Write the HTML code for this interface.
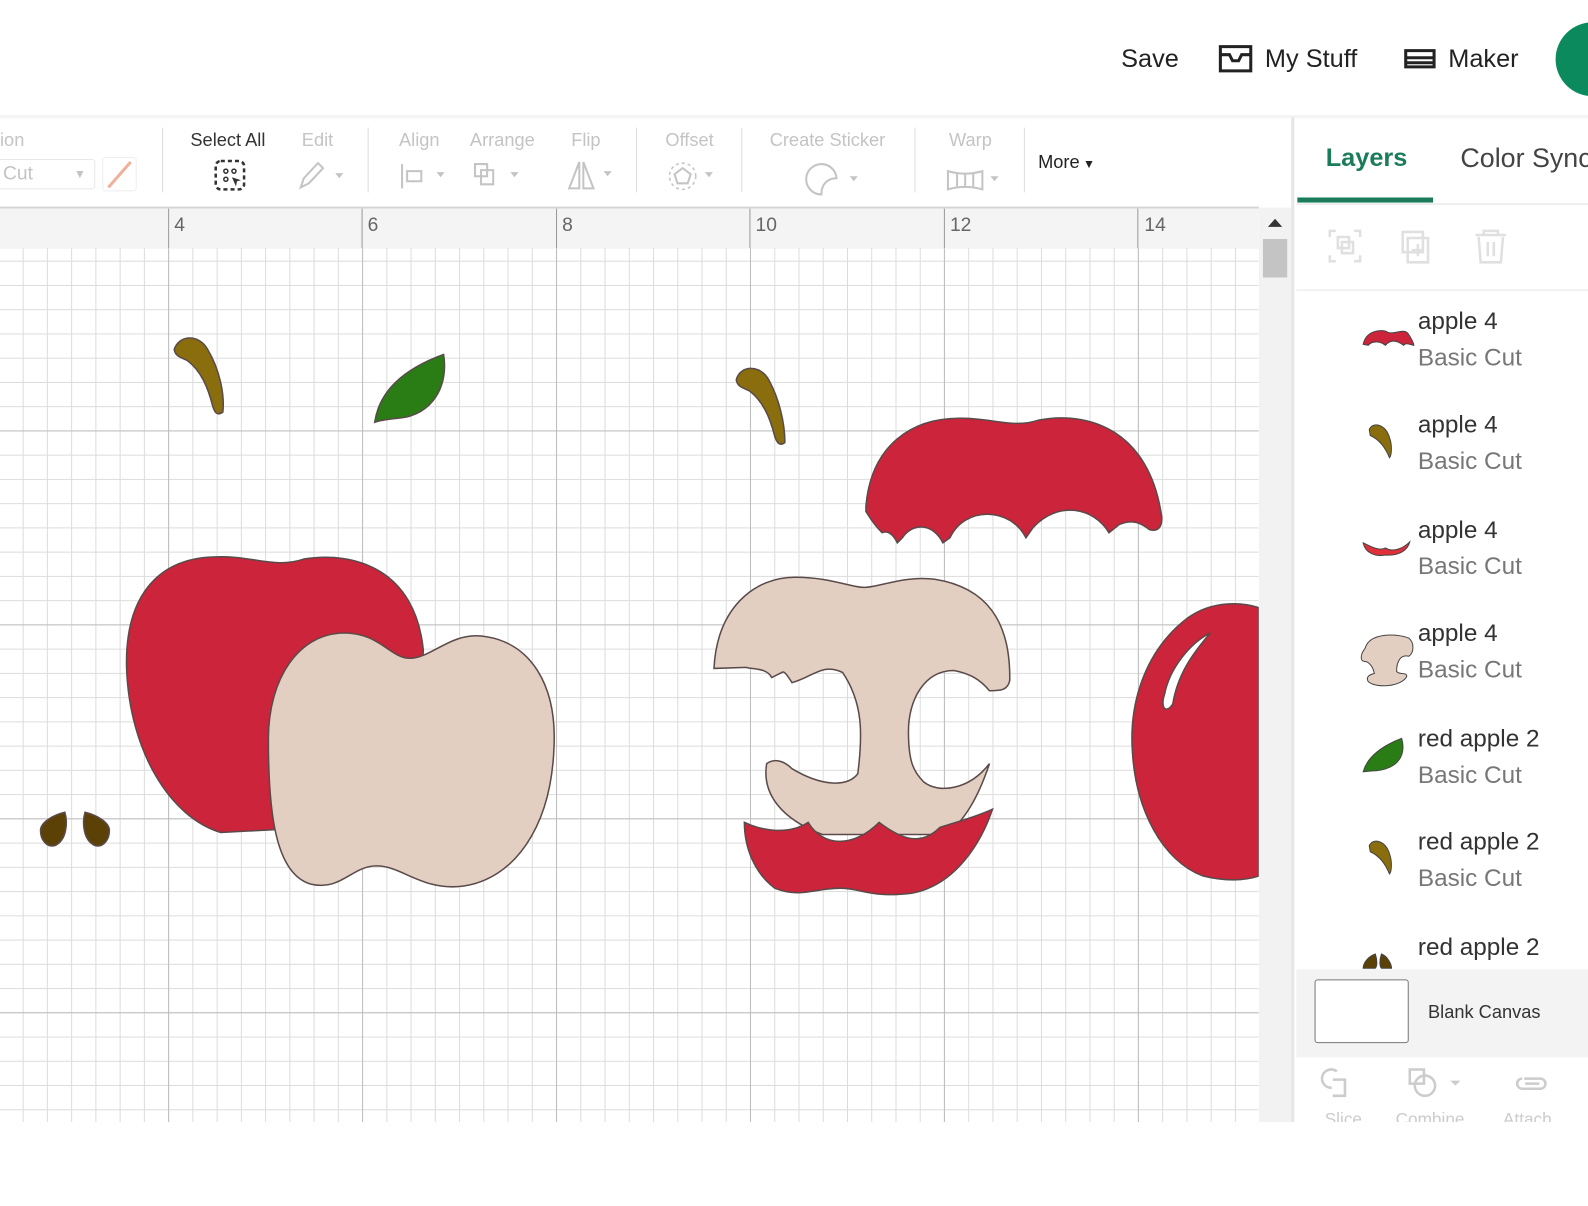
<!DOCTYPE html>
<html><head><meta charset="utf-8"><style>
*{margin:0;padding:0;box-sizing:border-box}
body{width:1588px;height:1191px;overflow:hidden;background:#fff;font-family:"Liberation Sans",sans-serif;position:relative}
#w{position:absolute;left:0;top:0;width:1568px;height:1176px;transform:scale(1.01276);transform-origin:0 0}
.abs{position:absolute}
.tb{color:#c4c4c4;font-size:18px}
.lt{position:absolute;left:1400px;font-size:24px;color:#333;line-height:36px}
.lt span{display:block;color:#777}
</style></head><body><div id="w">
<!-- header -->
<div class="abs" style="left:1107px;top:44px;font-size:25px;color:#222">Save</div>
<svg class="abs" style="left:1202px;top:42px" width="36" height="32" viewBox="0 0 36 32"><path d="M3 4h30v24H3z M3 12h9l3 6h6l3-6h9" fill="none" stroke="#222" stroke-width="3"/></svg>
<div class="abs" style="left:1249px;top:44px;font-size:25px;color:#222">My Stuff</div>
<svg class="abs" style="left:1384px;top:46px" width="36" height="24" viewBox="0 0 36 24"><path d="M4 4h28v16H4z M4 11h28 M4 16h28" fill="none" stroke="#222" stroke-width="3"/></svg>
<div class="abs" style="left:1430px;top:44px;font-size:25px;color:#222">Maker</div>
<div class="abs" style="left:1536px;top:22px;width:80px;height:73px;border-radius:40px;background:#0b8a5e"></div>
<div class="abs" style="left:0;top:114px;width:1588px;height:4px;background:linear-gradient(#eee,#fff)"></div>
<!-- toolbar -->
<div class="abs tb" style="left:0;top:128px">ion</div>
<div class="abs" style="left:-4px;top:157px;width:98px;height:30px;border:1px solid #e8e8e8;border-radius:3px;color:#c4c4c4;font-size:19px;padding:3px 6px">Cut<span style="position:absolute;left:76px;font-size:12px;top:7px">▼</span></div>
<div class="abs" style="left:101px;top:155px;width:34px;height:34px;border:1px solid #eee;border-radius:3px"></div>
<svg class="abs" style="left:101px;top:155px" width="34" height="34"><line x1="6" y1="30" x2="28" y2="5" stroke="#f0b09a" stroke-width="3"/></svg>
<div class="abs" style="left:160px;top:126px;width:1px;height:64px;background:#ddd"></div>
<div class="abs" style="left:188px;top:128px;font-size:18px;color:#333">Select All</div>
<svg class="abs" style="left:210px;top:156px" width="34" height="34"><rect x="3" y="3" width="28" height="28" rx="5" fill="none" stroke="#333" stroke-width="2.5" stroke-dasharray="4 3"/><circle cx="13" cy="13" r="2" fill="none" stroke="#333" stroke-width="1.5"/><circle cx="21" cy="13" r="2" fill="none" stroke="#333" stroke-width="1.5"/><circle cx="13" cy="21" r="2" fill="none" stroke="#333" stroke-width="1.5"/><path d="M19 19l9 3-4 1-1 5z" fill="#333"/></svg>
<div class="abs tb" style="left:298px;top:128px">Edit</div>
<svg class="abs" style="left:293px;top:157px" width="50" height="32"><path d="M4 28l3-9 14-15 5 5-14 15z" fill="none" stroke="#c4c4c4" stroke-width="2"/><path d="M38 14h8l-4 5z" fill="#c4c4c4"/></svg>
<div class="abs" style="left:363px;top:126px;width:1px;height:64px;background:#ddd"></div>
<div class="abs tb" style="left:394px;top:128px">Align</div>
<svg class="abs" style="left:393px;top:160px" width="50" height="28"><path d="M4 2v24 M9 9h14v10H9z" fill="none" stroke="#c4c4c4" stroke-width="2"/><path d="M38 10h8l-4 5z" fill="#c4c4c4"/></svg>
<div class="abs tb" style="left:464px;top:128px">Arrange</div>
<svg class="abs" style="left:466px;top:158px" width="50" height="30"><path d="M3 4h12v12H3z M9 10h12v14H9z" fill="none" stroke="#c4c4c4" stroke-width="2"/><path d="M38 12h8l-4 5z" fill="#c4c4c4"/></svg>
<div class="abs tb" style="left:564px;top:128px">Flip</div>
<svg class="abs" style="left:558px;top:157px" width="50" height="32"><path d="M14 3L4 29h10z M18 3l10 26H18z" fill="none" stroke="#c4c4c4" stroke-width="2"/><path d="M38 12h8l-4 5z" fill="#c4c4c4"/></svg>
<div class="abs" style="left:628px;top:126px;width:1px;height:64px;background:#ddd"></div>
<div class="abs tb" style="left:657px;top:128px">Offset</div>
<svg class="abs" style="left:658px;top:158px" width="50" height="32"><path d="M16 8l8 6-3 9h-10l-3-9z" fill="none" stroke="#c4c4c4" stroke-width="2"/><circle cx="16" cy="16" r="13" fill="none" stroke="#c4c4c4" stroke-width="1.5" stroke-dasharray="3 3"/><path d="M38 12h8l-4 5z" fill="#c4c4c4"/></svg>
<div class="abs" style="left:732px;top:126px;width:1px;height:64px;background:#ddd"></div>
<div class="abs tb" style="left:760px;top:128px">Create Sticker</div>
<svg class="abs" style="left:793px;top:160px" width="56" height="36"><path d="M18 32A15 15 0 1 1 33 16C24 16 18 22 18 32z" fill="none" stroke="#c4c4c4" stroke-width="2"/><path d="M46 14h8l-4 5z" fill="#c4c4c4"/></svg>
<div class="abs" style="left:903px;top:126px;width:1px;height:64px;background:#ddd"></div>
<div class="abs tb" style="left:937px;top:128px">Warp</div>
<svg class="abs" style="left:933px;top:164px" width="58" height="28"><path d="M3 5q17 5 34 0v18q-17-5-34 0z M12 7v14 M20 8v13 M28 7v14" fill="none" stroke="#c4c4c4" stroke-width="2"/><path d="M45 10h8l-4 5z" fill="#c4c4c4"/></svg>
<div class="abs" style="left:1011px;top:126px;width:1px;height:64px;background:#ddd"></div>
<div class="abs" style="left:1025px;top:150px;font-size:18px;color:#222">More<span style="font-size:12px"> ▼</span></div>
<!-- ruler -->
<div class="abs" style="left:0;top:204px;width:1243px;height:2px;background:#d4d4d4"></div>
<svg class="abs" style="left:0;top:206px" width="1243" height="40">
<rect width="1243" height="40" fill="#f4f4f4"/>
<g stroke="#999" stroke-width="1">
<line x1="166.5" y1="0" x2="166.5" y2="40"/><line x1="357.5" y1="0" x2="357.5" y2="40"/><line x1="549.5" y1="0" x2="549.5" y2="40"/><line x1="740.5" y1="0" x2="740.5" y2="40"/><line x1="932.5" y1="0" x2="932.5" y2="40"/><line x1="1123.5" y1="0" x2="1123.5" y2="40"/>
</g>
<g font-size="19" fill="#666"><text x="172" y="22">4</text><text x="363" y="22">6</text><text x="555" y="22">8</text><text x="746" y="22">10</text><text x="938" y="22">12</text><text x="1130" y="22">14</text></g>
<line x1="0" y1="39.5" x2="1243" y2="39.5" stroke="#ccc"/>
</svg>
<!-- canvas -->
<svg class="abs" style="left:0;top:245px" width="1243" height="863" viewBox="0 245 1243 863">
<defs>
<pattern id="mn" x="166" y="425" width="23.94" height="23.94" patternUnits="userSpaceOnUse"><path d="M0 0.5H23.94M0.5 0V23.94" stroke="#dcdcdc" fill="none"/></pattern>
<pattern id="mj" x="166" y="425" width="191.5" height="191.5" patternUnits="userSpaceOnUse"><path d="M0 0.5H191.5M0.5 0V191.5" stroke="#bdbdbd" fill="none"/></pattern>
</defs>
<rect x="0" y="245" width="1243" height="863" fill="#fff"/>
<rect x="0" y="245" width="1243" height="863" fill="url(#mn)"/>
<rect x="0" y="245" width="1243" height="863" fill="url(#mj)"/>
<g stroke="#5a4a4a" stroke-width="1.5">
<path d="M172 345c5-15 25-15 33 0c12 20 17 45 15 62c-6 4-8 0-10-6c-5-20-12-35-25-45c-6-3-12-4-13-11z" fill="#8a6d0c"/>
<path d="M727 375c4-15 24-15 32 0c10 18 16 42 16 62c-5 4-8 0-10-6c-5-20-12-35-25-45c-6-3-12-4-13-11z" fill="#8a6d0c"/>
<path d="M370 417c5-35 35-55 68-67c5 30-10 60-45 63c-10 1-18 2-23 4z" fill="#2a7d15"/>
<path d="M125 660c-2-70 30-108 85-110c40-2 60 12 90 2c50-8 110 10 118 90l-10 170l-190 10c-50-15-90-80-93-162z" fill="#cc243a"/>
<path d="M265 730c0-60 30-105 75-105c35 0 45 25 65 25s40-25 70-22c50 5 75 50 72 110c-3 80-40 130-90 137c-40 5-60-20-85-20s-35 25-65 18c-35-10-42-70-42-143z" fill="#e3cfc2"/>
<path d="M40 820c0-8 12-15 24-18c3 10 2 28-10 33c-8 2-14-6-14-15z" fill="#5c4107"/>
<path d="M108 820c0-8-12-15-24-18c-3 10-2 28 10 33c8 2 14-6 14-15z" fill="#5c4107"/>
<path d="M855 500c5-60 45-88 95-87c30 0 50 10 75 2c50-10 110 10 122 95c1 12-5 15-12 13c-10-8-18-10-30-5l-10 8c-15-25-50-32-75-5l-7 10c-15-30-60-32-75 0l-7 5c-10-20-30-20-40-5l-5 5c-5-10-10-12-15-10c-10-10-12-15-16-21z" fill="#cc243a"/>
<path d="M705 660c3-60 40-90 80-90c35 0 55 10 68 10c15 0 40-12 70-8c50 8 75 40 74 100c-2 10-10 10-20 10c-10-12-20-17-35-20c-30 0-45 30-45 60c0 30 5 40 15 50c15 12 45 8 65-18c-10 30-25 60-45 70l-120 0c-40-15-60-40-55-70c10-7 20 0 25 5c30 18 55 18 65 5c5-40 5-70-15-100c-20-10-30 5-50 10c-5-8-8-12-10-10l-10 5c-5-10-20-8-25-10z" fill="#e3cfc2"/>
<path d="M735 812c10 5 40 15 63 0c15 25 45 25 70 0c20 15 40 25 60 5c15-5 35-10 52-18c-10 30-35 75-80 83c-40 5-50-5-70-5c-25 0-40 10-65 0c-20-15-30-40-30-65z" fill="#cc243a"/>
<path d="M1243 600c-15-5-45-8-70 10c-40 30-58 80-55 130c3 60 30 110 70 125c20 5 40 5 55 0z" fill="#cc243a"/>
<path d="M1195 625c-20 10-40 35-45 60c-5 15 2 20 8 10c5-30 20-50 37-70z" fill="#fff"/>
</g>
</svg>
<!-- scrollbar -->
<div class="abs" style="left:1243px;top:205px;width:32px;height:903px;background:#f2f2f2"></div>
<div class="abs" style="left:1252px;top:216px;width:0;height:0;border-left:7px solid transparent;border-right:7px solid transparent;border-bottom:8px solid #333"></div>
<div class="abs" style="left:1247px;top:236px;width:24px;height:38px;background:#c4c4c4"></div>
<div class="abs" style="left:1275px;top:116px;width:3px;height:992px;background:#e6e6e6"></div>
<!-- right panel -->
<div class="abs" style="left:1309px;top:142px;font-size:25px;color:#1a7c5a;font-weight:bold">Layers</div>
<div class="abs" style="left:1442px;top:141px;font-size:26.5px;color:#444;white-space:nowrap">Color Sync</div>
<div class="abs" style="left:1280px;top:201px;width:308px;height:1px;background:#ddd"></div>
<div class="abs" style="left:1281px;top:195px;width:134px;height:5px;background:#1a7c5a"></div>
<svg class="abs" style="left:1310px;top:225px" width="190" height="38" fill="none" stroke="#e0e0e0" stroke-width="2.5">
<path d="M3 9V3h6M27 3h6v6M33 27v6h-6M9 33H3v-6M11 9h11v11H11zM15 14h11v11H15z"/>
<path d="M75 4h20v20H75zM80 10h20v24H80zM90 16v12M84 22h12"/>
<path d="M147 7h30M155 7V3h14v4M150 9l2 25h20l2-25M159 14v14M165 14v14"/>
</svg>
<div class="abs" style="left:1280px;top:286px;width:308px;height:1px;background:#e6e6e6"></div>
<svg class="abs" style="left:1340px;top:300px" width="60" height="660" stroke="#444" stroke-width="1">
<path d="M6 40c3-15 20-15 24-12c6 3 15-4 20 1c3 4 6 10 6 12c-5-1-8-3-10 0c-8-6-14-5-18 0c-6-5-14-4-17 0z" fill="#cc243a"/>
<path d="M12 124c4-8 16-5 20 8c3 8 2 18 0 20c-4-10-10-18-19-22z" fill="#8a6d0c"/>
<path d="M6 236c10 5 16 8 22 5c8 5 18 0 24-6c-2 8-10 14-24 13c-10 2-20-2-22-12z" fill="#e0303a"/>
<path d="M8 340c4-15 30-15 43-10c6 5 5 15 0 18c-8-2-12 5-12 15c4 4 10 0 10 5c-5 10-30 12-38 5c-3-5 2-7 6-8c-1-6-5-12-10-12c-4 0-4-7 1-13z" fill="#e3cfc2"/>
<path d="M6 462c5-18 25-28 38-33c5 18-5 30-25 32c-6 0-10 1-13 1z" fill="#2a7d15"/>
<path d="M12 535c4-8 16-5 20 8c3 8 2 18 0 20c-4-10-10-18-19-22z" fill="#8a6d0c"/>
<path d="M6 656c0-6 6-12 12-14c2 6 2 12 0 14z M34 656c0-4-4-12-10-14c-2 6-2 12 0 14z" fill="#5c4107"/>
</svg>
<div class="lt" style="top:300px">apple 4<span>Basic Cut</span></div>
<div class="lt" style="top:402px">apple 4<span>Basic Cut</span></div>
<div class="lt" style="top:506px">apple 4<span>Basic Cut</span></div>
<div class="lt" style="top:608px">apple 4<span>Basic Cut</span></div>
<div class="lt" style="top:712px">red apple 2<span>Basic Cut</span></div>
<div class="lt" style="top:814px">red apple 2<span>Basic Cut</span></div>
<div class="lt" style="top:918px">red apple 2</div>
<div class="abs" style="left:1280px;top:957px;width:308px;height:87px;background:#f3f3f3"></div>
<div class="abs" style="left:1298px;top:967px;width:93px;height:63px;background:#fff;border:1.5px solid #777;border-radius:3px"></div>
<div class="abs" style="left:1410px;top:989px;font-size:18px;color:#333">Blank Canvas</div>
<svg class="abs" style="left:1300px;top:1050px" width="288" height="40" fill="none" stroke="#ccc" stroke-width="2.5">
<path d="M20 8a9 9 0 1 0-5 16M16 16h12v16H16"/>
<path d="M92 6h14v14H92z"/><circle cx="107" cy="22" r="10"/><path d="M132 17h10l-5 5z" fill="#ccc" stroke="none"/>
<path d="M205 15h16a5 5 0 0 1 0 10h-18a5 5 0 0 1 0-10"/><path d="M206 20h14"/>
</svg>
<div class="abs" style="left:1308px;top:1094px;width:280px;height:14px;overflow:hidden;font-size:17px;color:#ccc;white-space:nowrap"><span style="position:relative;top:2px">Slice</span><span style="position:absolute;left:70px;top:2px">Combine</span><span style="position:absolute;left:176px;top:2px">Attach</span></div>
<div class="abs" style="left:0;top:1108px;width:1588px;height:83px;background:#fff"></div>
</div></body></html>
